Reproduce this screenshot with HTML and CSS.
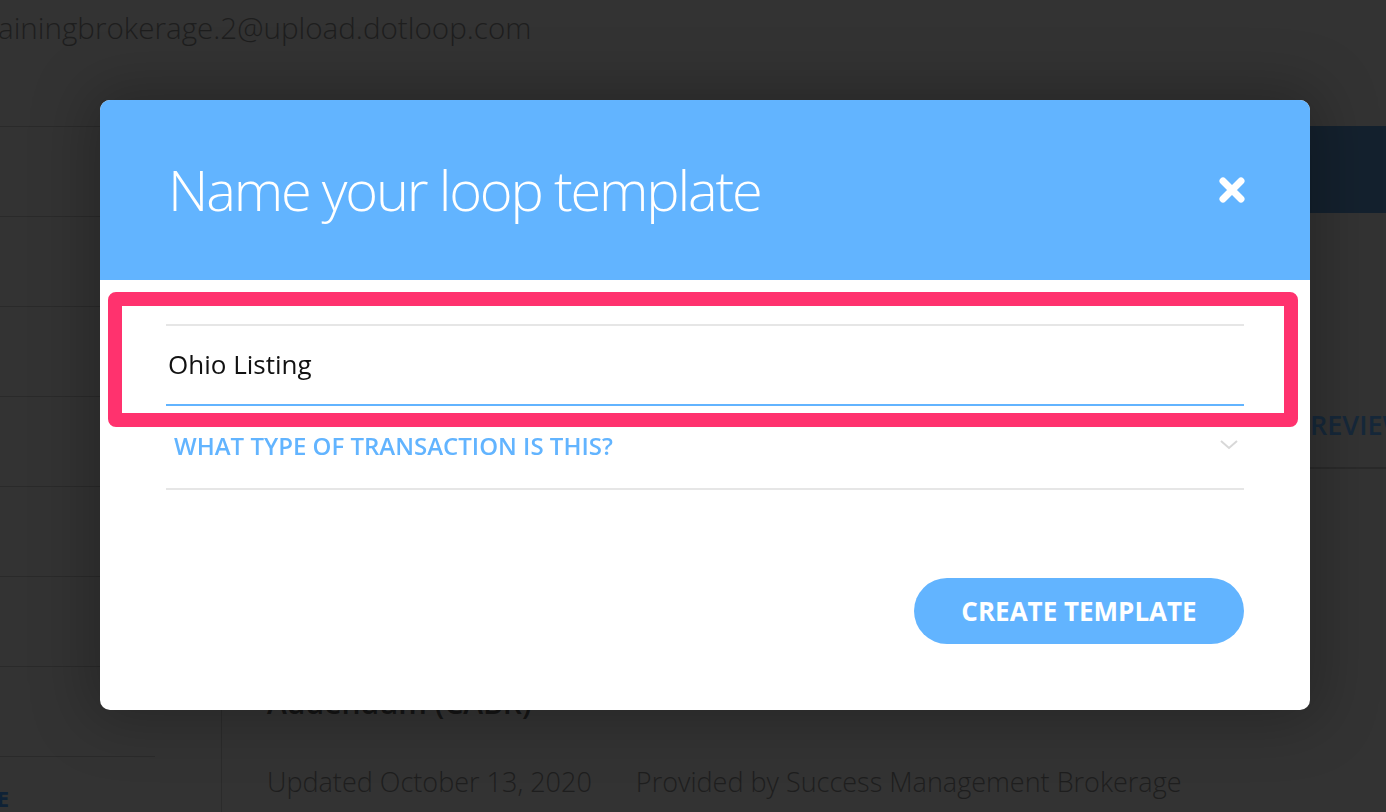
FILE: index.html
```html
<!DOCTYPE html>
<html>

<head>
  <meta name="viewport" content="width=device-width,initial-scale=1.0">
  <title>Loop templates</title>
  <link rel="stylesheet" href="styles.css">
</head>

<body>

  <div id="topbar">
    <p class="uploadEmail">ainingbrokerage.2@upload.dotloop.com</p>
  </div>

  <div id="page">
    <ul id="sidebar">
      <li></li>
      <li></li>
      <li></li>
      <li></li>
      <li></li>
      <li></li>
      <li></li>
      <li class="sidebarLink">TE</li>
    </ul>

    <div id="main">
      <div class="mainBanner"></div>
      <div class="tabs">
        <span class="tab">REVIEW</span>
      </div>
      <div class="templateInfo">
        <h2 class="templateName">Addendum (CABR)</h2>
        <p class="templateMeta">
          <span>Updated October 13, 2020</span>
          <span>Provided by Success Management Brokerage</span>
        </p>
      </div>
    </div>
  </div>

  <div id="overlay">
    <div class="modal">
      <div class="modalHeader">
        <h1>Name your loop template</h1>
        <button class="closeBtn" aria-label="Close">
          <svg width="28" height="28" viewBox="0 0 28 28">
            <path d="M5 5 L23 23 M23 5 L5 23" stroke="#fff" stroke-width="7" stroke-linecap="round" />
          </svg>
        </button>
      </div>

      <div class="modalBody">
        <div class="nameField">
          <input id="templateName" value="Ohio Listing" autocomplete="off">
        </div>
        <div class="typeField">
          <span>WHAT TYPE OF TRANSACTION IS THIS?</span>
          <svg width="18" height="10" viewBox="0 0 18 10">
            <path d="M1 1 L9 8 L17 1" fill="none" stroke="#d8d8d8" stroke-width="2" />
          </svg>
        </div>
        <div class="modalActions">
          <button class="createBtn">CREATE TEMPLATE</button>
        </div>
      </div>
    </div>

    <div class="highlight"></div>
  </div>

</body>

</html>
```

FILE: styles.css
```css
body {
  margin: 0;
  background: #333333;
  font-family: "Open Sans", "Liberation Sans", sans-serif;
  color: #222;
  overflow: hidden;
  height: 812px;
}

#topbar {
  height: 126px;
  box-sizing: border-box;
}

.uploadEmail {
  margin: 0;
  padding-top: 8px;
  margin-left: -2px;
  font-size: 29.6px;
  font-weight: 300;
  color: #1e1e1e;
  line-height: 40px;
  white-space: nowrap;
}

#page {
  display: flex;
}

#sidebar {
  list-style: none;
  margin: 0;
  padding: 0;
  width: 222px;
  box-sizing: border-box;
  border-right: 1px solid #2b2b2b;
  height: 686px;
  flex-shrink: 0;
}

#sidebar li {
  width: 155px;
  height: 90px;
  border-top: 1px solid #2a2a2a;
  box-sizing: border-box;
}

#sidebar .sidebarLink {
  padding-top: 26px;
  text-indent: -16px;
  font-weight: 700;
  font-size: 22px;
  color: #0f2236;
}

#main {
  flex-grow: 1;
  min-width: 0;
}

.mainBanner {
  height: 87px;
  background: #14212e;
}

.tabs {
  height: 256px;
  border-bottom: 2px solid #2a2a2a;
  box-sizing: border-box;
  padding: 193px 0 0 1088px;
  white-space: nowrap;
}

.tab {
  font-size: 27px;
  font-weight: 600;
  color: #16283a;
}

.templateInfo {
  padding-left: 45px;
}

.templateName {
  margin: 0;
  padding-top: 214px;
  font-size: 30px;
  font-weight: 600;
  color: #151515;
  line-height: 40px;
}

.templateMeta {
  margin: 0;
  padding-top: 40px;
  font-size: 27px;
  font-weight: 300;
  color: #1e1e1e;
  display: flex;
  gap: 44px;
  white-space: nowrap;
}

#overlay {
  position: fixed;
  top: 0;
  left: 0;
  right: 0;
  bottom: 0;
}

.modal {
  position: absolute;
  top: 100px;
  left: 100px;
  width: 1210px;
  height: 610px;
  background: #fff;
  border-radius: 10px;
  overflow: hidden;
  box-shadow: 0 0 60px 10px rgba(0, 0, 0, 0.25);
}

.modalHeader {
  height: 180px;
  background: #62b4ff;
  display: flex;
  align-items: center;
  justify-content: space-between;
  padding: 0 64px 0 68px;
}

.modalHeader h1 {
  margin: 0;
  font-size: 56px;
  font-weight: 300;
  color: #fff;
  letter-spacing: -2.2px;
  padding-bottom: 2px;
}

.closeBtn {
  background: none;
  border: none;
  padding: 0;
  width: 28px;
  height: 28px;
  cursor: pointer;
}

.modalBody {
  padding: 44px 66px 0 66px;
}

.nameField {
  border-top: 2px solid #e6e6e6;
  height: 80px;
  display: flex;
  align-items: center;
}

#templateName {
  border: none;
  border-bottom: 2px solid #62b4ff;
  width: 100%;
  height: 80px;
  box-sizing: border-box;
  padding: 0 0 2px 2px;
  font-family: "Open Sans", "Liberation Sans", sans-serif;
  font-size: 26px;
  color: #111;
  background: transparent;
}

#templateName:focus {
  outline: none;
}

.typeField {
  height: 84px;
  border-bottom: 2px solid #e6e6e6;
  display: flex;
  align-items: center;
  justify-content: space-between;
  padding: 0 6px 4px 8px;
  box-sizing: border-box;
}

.typeField span {
  font-size: 24px;
  font-weight: 600;
  color: #62b4ff;
}

.modalActions {
  display: flex;
  justify-content: flex-end;
  padding-top: 88px;
}

.createBtn {
  background: #62b4ff;
  border: none;
  border-radius: 33px;
  width: 330px;
  height: 66px;
  color: #fff;
  font-family: "Open Sans", "Liberation Sans", sans-serif;
  font-size: 26px;
  font-weight: 700;
  cursor: pointer;
}

.highlight {
  position: absolute;
  top: 292px;
  left: 108px;
  width: 1190px;
  height: 135px;
  box-sizing: border-box;
  border: 14px solid #ff326e;
  border-radius: 8px;
}
```
